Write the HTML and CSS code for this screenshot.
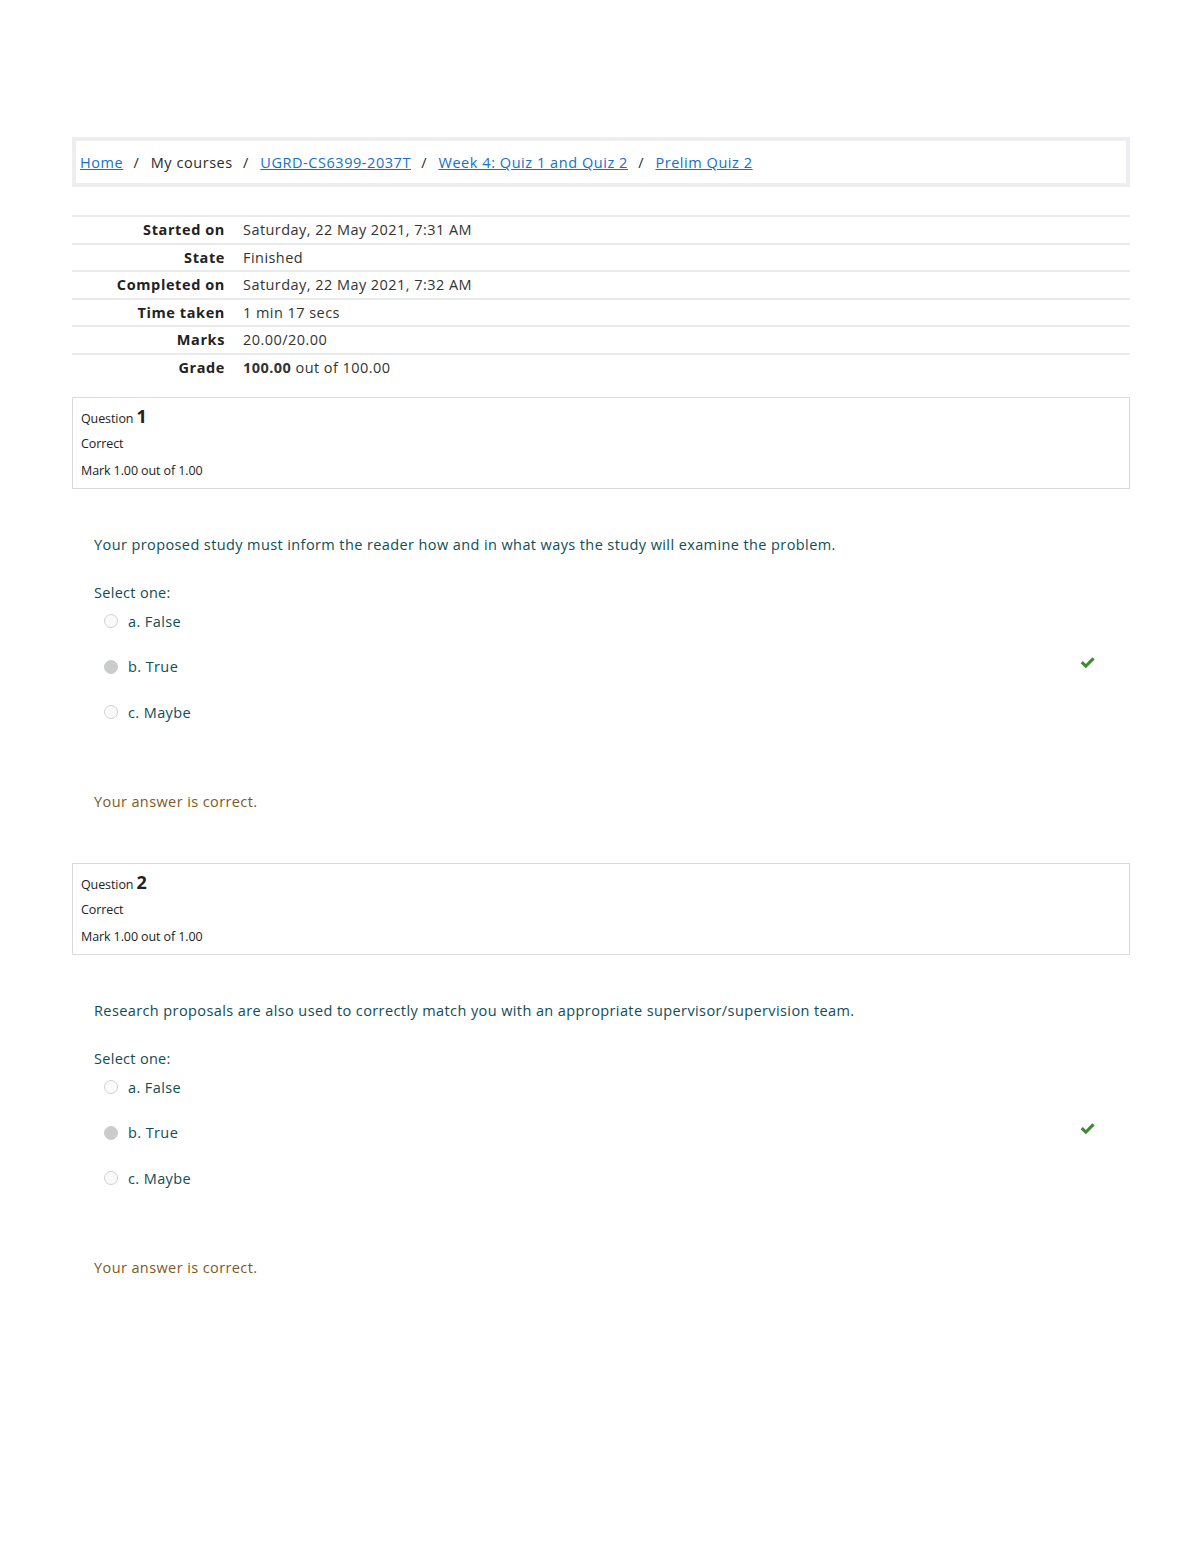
FILE: index.html
```html
<!DOCTYPE html>
<html lang="en">
<head>
    <meta charset="UTF-8">
    <title>Prelim Quiz 2: Attempt review</title>
    <link rel="stylesheet" href="styles.css">
</head>
<body>

<div class="page">
    <nav class="breadcrumb">
        <a href="#">Home</a> <span class="sep">/</span>
        <span>My courses</span> <span class="sep">/</span>
        <a href="#">UGRD-CS6399-2037T</a> <span class="sep">/</span>
        <a href="#">Week 4: Quiz 1 and Quiz 2</a> <span class="sep">/</span>
        <a href="#">Prelim Quiz 2</a>
    </nav>

    <table class="summary">
        <tr><th>Started on</th><td>Saturday, 22 May 2021, 7:31 AM</td></tr>
        <tr><th>State</th><td>Finished</td></tr>
        <tr><th>Completed on</th><td>Saturday, 22 May 2021, 7:32 AM</td></tr>
        <tr><th>Time taken</th><td>1 min 17 secs</td></tr>
        <tr><th>Marks</th><td>20.00/20.00</td></tr>
        <tr><th>Grade</th><td><b>100.00</b> out of 100.00</td></tr>
    </table>

    <!-- Question 1 -->
    <div class="que">
        <div class="info">
            <h3 class="no">Question <span class="qno">1</span></h3>
            <div class="state">Correct</div>
            <div class="grade">Mark 1.00 out of 1.00</div>
        </div>
        <div class="content">
            <p class="qtext">Your proposed study must inform the reader how and in what ways the study will examine the problem.</p>
            <div class="prompt">Select one:</div>
            <div class="answer">
                <div class="option"><span class="radio"></span>a. False</div>
                <div class="option"><span class="radio checked"></span>b. True
                    <svg class="tick" viewBox="0 0 16 16" width="17" height="17"><path d="M1.5 8.6 L3.6 6.5 L6.4 9.3 L12.6 3.1 L14.7 5.2 L6.4 13.5 Z" fill="#3c8d2f"/></svg>
                </div>
                <div class="option"><span class="radio"></span>c. Maybe</div>
            </div>
            <div class="feedback">Your answer is correct.</div>
        </div>
    </div>

    <!-- Question 2 -->
    <div class="que">
        <div class="info">
            <h3 class="no">Question <span class="qno">2</span></h3>
            <div class="state">Correct</div>
            <div class="grade">Mark 1.00 out of 1.00</div>
        </div>
        <div class="content">
            <p class="qtext">Research proposals are also used to correctly match you with an appropriate supervisor/supervision team.</p>
            <div class="prompt">Select one:</div>
            <div class="answer">
                <div class="option"><span class="radio"></span>a. False</div>
                <div class="option"><span class="radio checked"></span>b. True
                    <svg class="tick" viewBox="0 0 16 16" width="17" height="17"><path d="M1.5 8.6 L3.6 6.5 L6.4 9.3 L12.6 3.1 L14.7 5.2 L6.4 13.5 Z" fill="#3c8d2f"/></svg>
                </div>
                <div class="option"><span class="radio"></span>c. Maybe</div>
            </div>
            <div class="feedback">Your answer is correct.</div>
        </div>
    </div>
</div>

</body>
</html>
```

FILE: styles.css
```css
body {
    margin: 0;
    font-family: 'Open Sans', 'Noto Sans', sans-serif;
    font-size: 14.5px;
    color: #1d2125;
    background-color: #fff;
}

.page {
    margin: 137px 70px 0 72px;
}

.breadcrumb {
    border: 4px solid #eceef1;
    height: 42px;
    line-height: 44px;
    padding: 0 4px;
    color: #2b2b2b;
    letter-spacing: 0.55px;
}

.breadcrumb a {
    color: #1570c6;
    text-decoration: underline;
}

.breadcrumb .sep {
    margin: 0 7px 0 6px;
}

.summary {
    width: 100%;
    margin-top: 28px;
    border-collapse: collapse;
    border-top: 2px solid #e9eaec;
}

.summary tr + tr {
    border-top: 2px solid #e9eaec;
}

.summary th {
    width: 153px;
    padding: 0;
    height: 25.5px;
    text-align: right;
    font-weight: bold;
    color: #222;
    letter-spacing: 0.6px;
}

.summary td {
    padding: 0 0 0 18px;
    color: #333;
    letter-spacing: 0.45px;
}

.que {
    margin-top: 17px;
}

.info {
    border: 1px solid #d8dadd;
    height: 78px;
    padding: 6px 8px;
    font-size: 12.5px;
    color: #222;
    letter-spacing: -0.1px;
}

.info .no {
    margin: 0;
    font-size: 12.5px;
    font-weight: normal;
    line-height: 24px;
}

.info .qno {
    font-size: 18px;
    font-weight: bold;
    letter-spacing: 0;
}

.info .state {
    line-height: 26px;
}

.info .grade {
    line-height: 28px;
}

.content {
    padding: 0 32px 33px 22px;
    color: #0f4d57;
}

.qtext {
    margin: 45px 0 0;
    line-height: 22px;
    letter-spacing: 0.4px;
}

.prompt {
    margin-top: 26px;
    line-height: 22px;
    letter-spacing: 0.3px;
}

.answer {
    padding-left: 10px;
}

.option {
    position: relative;
    display: flex;
    align-items: center;
    height: 22px;
    margin-top: 6px;
    margin-bottom: 23.5px;
    letter-spacing: 0.4px;
}

.option + .option {
    margin-top: 0;
}

.radio {
    width: 12px;
    height: 12px;
    border: 1px solid #cfd2d5;
    border-radius: 50%;
    margin: 0 10px 0 0;
    background: #fafafa;
}

.radio.checked {
    background: #c9cbcd;
    border-color: #c9cbcd;
}

.tick {
    position: absolute;
    right: 2px;
    top: -2px;
}

.feedback {
    margin-top: 68px;
    line-height: 22px;
    color: #7c5a24;
    letter-spacing: 0.4px;
}
```
